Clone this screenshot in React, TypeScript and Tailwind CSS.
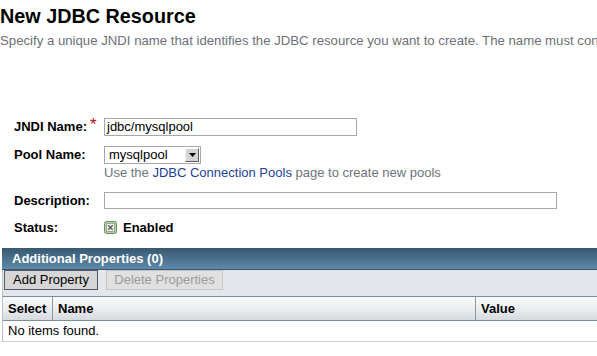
import React from "react";

function CheckIcon() {
  return (
    <svg width="13" height="13" viewBox="0 0 13 13">
      <rect x="0.5" y="0.5" width="12" height="12" rx="2" fill="#b9cdab" stroke="#6f8f5c" />
      <rect x="2.5" y="2.5" width="8" height="8" fill="#eef0ec" stroke="#97ad88" />
      <path d="M4.3 4.3 L8.7 8.7 M8.7 4.3 L4.3 8.7" stroke="#5b5f58" strokeWidth="1.4" />
    </svg>
  );
}

export default function App() {
  return (
    <div className="w-[597px] h-[356px] overflow-hidden bg-white font-['Liberation_Sans',Arial,sans-serif] text-black">
      <h1 className="pt-[5px] text-[19.8px] leading-[22px] font-bold text-black whitespace-nowrap">New JDBC Resource</h1>
      <p className="mt-[6px] text-[13.2px] leading-[16px] text-[#6b7079] whitespace-nowrap">
        Specify a unique JNDI name that identifies the JDBC resource you want to create. The name must contain only alphanumeric, underscore, dash, or dot characters.
      </p>

      <div className="mt-[69px] pl-[14px] text-[13px]">
        <div className="flex items-center h-[18px]">
          <div className="relative w-[90px] font-bold leading-[16px]">
            JNDI Name:
            <span className="absolute left-[76px] -top-[3px] text-[#b01010] font-normal text-[17px] leading-[17px]">*</span>
          </div>
          <div className="w-[253px] h-[18px] border border-[#a3a9ae] bg-white flex items-center pl-[2px] leading-[16px] text-black">
            jdbc/mysqlpool
          </div>
        </div>

        <div className="flex items-center h-[18px] mt-[10px]">
          <div className="w-[90px] font-bold leading-[16px]">Pool Name:</div>
          <div className="w-[97px] h-[18px] border border-[#a3a9ae] bg-white flex items-center justify-between pl-[4px] pr-[1px] leading-[16px]">
            <span>mysqlpool</span>
            <span className="w-[14px] h-[14px] bg-[#d4d4d4] border border-t-[#f4f4f4] border-l-[#f4f4f4] border-r-[#5f5f5f] border-b-[#5f5f5f] flex items-center justify-center">
              <svg width="7" height="4" viewBox="0 0 7 4">
                <path d="M0 0 H7 L3.5 4 Z" fill="#000" />
              </svg>
            </span>
          </div>
        </div>

        <div className="ml-[90px] mt-[1px] leading-[16px] text-[#6e737b] whitespace-nowrap">
          Use the <span className="text-[#213f99]">JDBC Connection Pools</span> page to create new pools
        </div>

        <div className="flex items-center h-[17px] mt-[11px]">
          <div className="w-[90px] font-bold leading-[16px]">Description:</div>
          <div className="w-[453px] h-[17px] border border-[#a3a9ae] bg-white" />
        </div>

        <div className="flex items-center h-[13px] mt-[12px]">
          <div className="w-[90px] font-bold leading-[13px]">Status:</div>
          <CheckIcon />
          <span className="ml-[6px] font-bold leading-[13px]">Enabled</span>
        </div>
      </div>

      <div className="mt-[14px] ml-[2px] w-[620px] text-[13px]">
        <div className="h-[22px] bg-gradient-to-b from-[#385870] to-[#5e8aab] border-b border-[#3d5467] flex items-center pl-[10px]">
          <span className="text-white font-bold leading-[16px]">Additional Properties (0)</span>
        </div>
        <div className="border-l border-[#b9c1c7]">
          <div className="h-[26px] bg-[#e3e7eb] flex items-start pl-[1px] gap-[8px]">
            <div className="h-[20px] w-[94px] bg-[#d6d6d6] border border-[#4d5d6a] flex items-center justify-center leading-[16px] text-black">
              Add Property
            </div>
            <div className="h-[20px] w-[117px] bg-[#e0e0e0] border border-[#c6c6c6] flex items-center justify-center leading-[16px] text-[#9c9c9c]">
              Delete Properties
            </div>
          </div>
          <div className="flex h-[25px] border-t border-b border-[#7b8e9c] bg-gradient-to-b from-[#f9f9f9] via-[#eceef0] to-[#d6dade] font-bold leading-[16px]">
            <div className="w-[50px] pl-[5px] flex items-center border-r border-[#8799a6]">Select</div>
            <div className="w-[423px] pl-[5px] flex items-center border-r border-[#8799a6]">Name</div>
            <div className="flex-1 pl-[5px] flex items-center">Value</div>
          </div>
          <div className="h-[21px] border-b border-[#cfcfcf] flex items-center pl-[5px] leading-[16px]">
            No items found.
          </div>
        </div>
      </div>
    </div>
  );
}
